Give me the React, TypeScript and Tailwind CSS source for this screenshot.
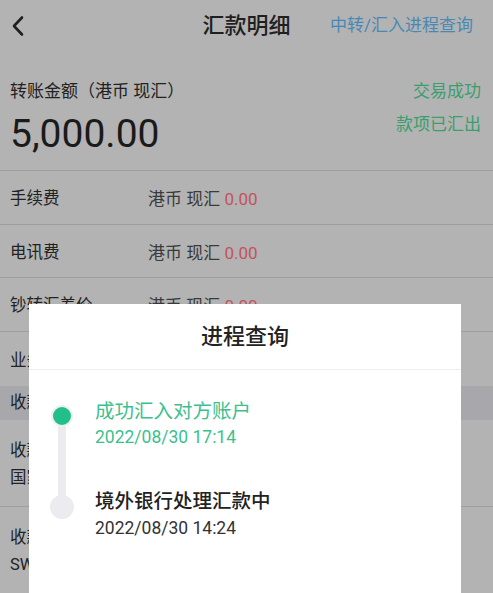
import React from "react";

const font = "font-['Roboto','Noto_Sans_CJK_SC',sans-serif]";

function Row({ label, value, last }: { label: string; value?: string; last?: boolean }) {
  return (
    <div className={`flex h-[53.5px] items-center px-[10px] pt-[5px] ${last ? "" : "border-b border-[#9e9e9e]"}`}>
      <div className="w-[138px] text-[16.5px] text-[#222]">{label}</div>
      <div className="text-[17px] text-[#3a3a3a]">
        港币 现汇 <span className="text-[#c4525c]">{value ?? "0.00"}</span>
      </div>
    </div>
  );
}

export default function App() {
  return (
    <div className={`relative w-[493px] h-[593px] overflow-hidden bg-[#b3b3b3] ${font}`}>
      {/* Header */}
      <div className="grid h-[52px] grid-cols-[1fr_auto_1fr] items-center px-[10px]">
        <div>
          <svg width="14" height="22" viewBox="0 0 14 22" fill="none" className="ml-[1px]">
            <path d="M11 2.5 L3 11 L11 19.5" stroke="#1f1f1f" strokeWidth="2.6" strokeLinecap="round" strokeLinejoin="round" />
          </svg>
        </div>
        <div className="text-[22px] font-medium text-[#1f1f1f] leading-none">汇款明细</div>
        <div className="flex justify-end pr-[10px] text-[17px] text-[#4a88b4]">中转/汇入进程查询</div>
      </div>

      {/* Amount */}
      <div className="flex h-[119px] justify-between border-b border-[#9e9e9e] px-[10px] pt-[27px]">
        <div>
          <div className="text-[17px] leading-[24px] text-[#222]">转账金额（港币 现汇）</div>
          <div className="mt-[9px] text-[39px] leading-[44px] text-[#1a1a1a]">5,000.00</div>
        </div>
        <div className="flex flex-col items-end pr-[2px] text-[17px] text-[#3a9e6e]">
          <div className="leading-[24px]">交易成功</div>
          <div className="mt-[9px] leading-[24px]">款项已汇出</div>
        </div>
      </div>

      <Row label="手续费" />
      <Row label="电讯费" />
      <Row label="钞转汇差价" />
      <div className="flex h-[54px] items-center px-[10px] pt-[5px]">
        <div className="w-[138px] text-[16.5px] text-[#222]">业务编号</div>
        <div className="text-[17px] text-[#3a3a3a]">HK20220830</div>
      </div>
      <div className="flex h-[34px] items-center bg-[#a8a8ac] px-[10px] pt-[2px] text-[16.5px] text-[#222]">收款人信息</div>
      <div className="flex h-[87px] flex-col justify-center border-b border-[#9e9e9e] px-[10px] pt-[2px] text-[16.5px] leading-[27px] text-[#222]">
        <div>收款人开户行</div>
        <div>国家/地区</div>
      </div>
      <div className="flex h-[87px] flex-col justify-center px-[10px] pt-[2px] text-[16.5px] leading-[27px] text-[#222]">
        <div>收款银行</div>
        <div>SWIFT</div>
      </div>

      {/* Modal */}
      <div className="absolute left-[29px] top-[304px] h-[320px] w-[432px] bg-white">
        <div className="flex h-[66px] items-center justify-center border-b border-[#eeeeee] text-[22px] font-medium text-[#222]">
          进程查询
        </div>
        <div className="relative pt-[30px]">
          <div className="absolute left-[29px] top-[46px] h-[92px] w-[8px] bg-[#ececf0]" />
          <div className="relative flex">
            <div className="flex w-[66px] justify-center pt-[5px]">
              <div className="h-[22px] w-[22px] rounded-full border-[2px] border-[#eef1f0] bg-[#22bf8a]" />
            </div>
            <div>
              <div className="text-[19.5px] leading-[24px] text-[#3dbf8f]">成功汇入对方账户</div>
              <div className="mt-[1px] text-[17.5px] leading-[24px] text-[#3dbf8f]">2022/08/30 17:14</div>
            </div>
          </div>
          <div className="relative mt-[41px] flex">
            <div className="flex w-[66px] justify-center pt-[5px]">
              <div className="h-[24px] w-[24px] rounded-full bg-[#ececf0]" />
            </div>
            <div>
              <div className="text-[19.5px] font-medium leading-[24px] text-[#222]">境外银行处理汇款中</div>
              <div className="mt-[2px] text-[17.5px] leading-[24px] text-[#333]">2022/08/30 14:24</div>
            </div>
          </div>
        </div>
      </div>
    </div>
  );
}
